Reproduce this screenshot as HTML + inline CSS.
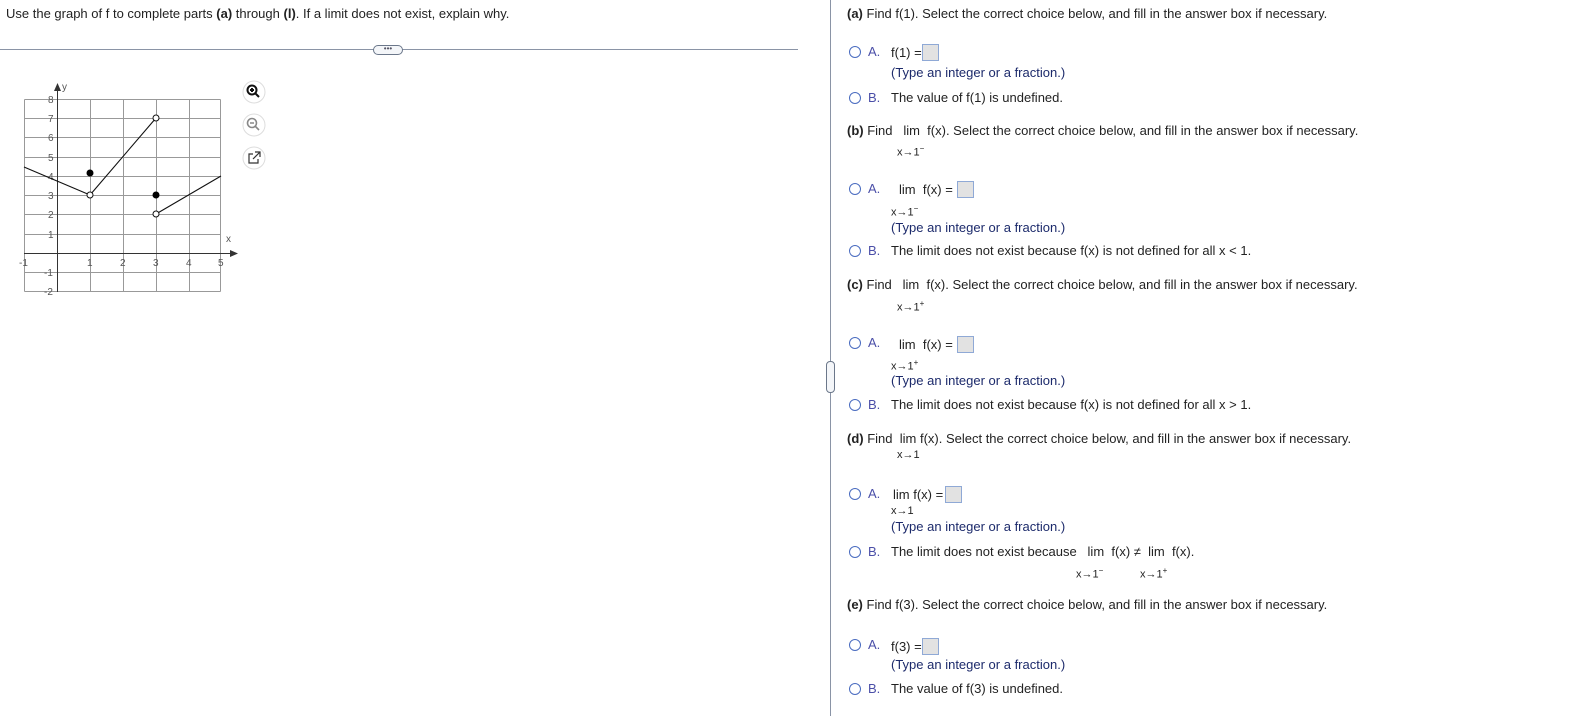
<!DOCTYPE html>
<html><head><meta charset="utf-8"><style>
body{margin:0;width:1588px;height:716px;background:#fff;font-family:"Liberation Sans",Arial,sans-serif;font-size:13px;color:#222;position:relative;overflow:hidden}
.t{position:absolute;white-space:nowrap;line-height:14px}
.r{position:absolute;width:10px;height:10px;border:1.3px solid #4a6cc0;border-radius:50%;left:849px}
.l{position:absolute;left:868px;color:#4b4fa8;line-height:14px}
.bx{position:absolute;width:15px;height:15px;background:#e2e2e2;border:1px solid #8fa9d6}
.bl{color:#1c2a6b}
.s{font-size:11px}
sup{font-size:8px}
</style></head><body>
<div class="t" style="left:6px;top:7px">Use the graph of f to complete parts <b>(a)</b> through <b>(l)</b>. If a limit does not exist, explain why.</div>
<div style="position:absolute;left:0;top:49px;width:798px;height:1px;background:#8a94a6"></div>
<div style="position:absolute;left:373px;top:45px;width:28px;height:8px;border:1px solid #6b778a;border-radius:5px;background:#f4f6f9;font-size:8px;line-height:6px;text-align:center;color:#556">•••</div>
<div style="position:absolute;left:830px;top:0;width:1px;height:716px;background:#8a94a6"></div>
<div style="position:absolute;left:826px;top:361px;width:7px;height:30px;border:1px solid #6b778a;border-radius:4px;background:#f4f6f9"></div>

<svg style="position:absolute;left:0;top:80px" width="280" height="220" viewBox="0 80 280 220">
<g stroke="#999" stroke-width="1" fill="none">
<path d="M24.5 99.5H220.5M24.5 118.5H220.5M24.5 137.5H220.5M24.5 157.5H220.5M24.5 176.5H220.5M24.5 195.5H220.5M24.5 214.5H220.5M24.5 234.5H220.5M24.5 272.5H220.5M24.5 291.5H220.5"/>
<path d="M24.5 99.5V291.5M90.5 99.5V291.5M123.5 99.5V291.5M156.5 99.5V291.5M189.5 99.5V291.5M220.5 99.5V291.5"/>
</g>
<path d="M57.5 86V292M24 253.5H236" stroke="#333" stroke-width="1"/>
<path d="M57.5 83L54 91H61Z M238 253.5L230 250V257Z" fill="#333"/>
<g font-family="Liberation Sans,Arial" font-size="10" fill="#555">
<text x="62" y="90">y</text><text x="226" y="242">x</text>
<text x="48" y="103">8</text><text x="48" y="122">7</text><text x="48" y="141">6</text><text x="48" y="161">5</text><text x="48" y="180">4</text><text x="48" y="199">3</text><text x="48" y="218">2</text><text x="48" y="238">1</text><text x="44" y="276">-1</text><text x="44" y="295">-2</text>
<text x="19" y="266">-1</text><text x="87" y="266">1</text><text x="120" y="266">2</text><text x="153" y="266">3</text><text x="186" y="266">4</text><text x="218" y="266">5</text>
</g>
<path d="M24 167L90 195M90 195L156 118M156 214L221 176" stroke="#111" stroke-width="1.1" fill="none"/>
<circle cx="90" cy="173" r="3.5" fill="#000"/><circle cx="156" cy="195" r="3.5" fill="#000"/>
<circle cx="90" cy="195" r="3" fill="#fff" stroke="#111"/><circle cx="156" cy="118" r="3" fill="#fff" stroke="#111"/><circle cx="156" cy="214" r="3" fill="#fff" stroke="#111"/>
<g>
<circle cx="254" cy="92" r="11" fill="#fff" stroke="#ddd"/><circle cx="252" cy="90" r="4.5" fill="none" stroke="#111" stroke-width="2"/><path d="M255 93L259 97M250 90H254M252 88V92" stroke="#111" stroke-width="2"/>
<circle cx="254" cy="125" r="11" fill="#fff" stroke="#ddd"/><circle cx="252" cy="123" r="4.5" fill="none" stroke="#888" stroke-width="1.6"/><path d="M255 126L259 130M250 123H254" stroke="#888" stroke-width="1.6"/>
<circle cx="254" cy="158" r="11" fill="#fff" stroke="#ddd"/><path d="M253 154H249V163H258V159M255 152H260V157M260 152L253 159" stroke="#333" stroke-width="1.2" fill="none"/>
</g>
</svg>

<div class="t" style="left:847px;top:7px"><b>(a)</b> Find f(1). Select the correct choice below, and fill in the answer box if necessary.</div>
<div class="r" style="top:46px"></div><div class="l" style="top:45px">A.</div>
<div class="t" style="left:891px;top:46px">f(1) =</div><div class="bx" style="left:922px;top:44px"></div>
<div class="t bl" style="left:891px;top:66px">(Type an integer or a fraction.)</div>
<div class="r" style="top:92px"></div><div class="l" style="top:91px">B.</div>
<div class="t" style="left:891px;top:91px">The value of f(1) is undefined.</div>

<div class="t" style="left:847px;top:124px"><b>(b)</b> Find &nbsp; lim &nbsp;f(x). Select the correct choice below, and fill in the answer box if necessary.</div>
<div class="t s" style="left:897px;top:142px">x→1<sup>−</sup></div>
<div class="r" style="top:183px"></div><div class="l" style="top:182px">A.</div>
<div class="t" style="left:899px;top:183px">lim &nbsp;f(x) =</div><div class="bx" style="left:957px;top:181px"></div>
<div class="t s" style="left:891px;top:202px">x→1<sup>−</sup></div>
<div class="t bl" style="left:891px;top:221px">(Type an integer or a fraction.)</div>
<div class="r" style="top:245px"></div><div class="l" style="top:244px">B.</div>
<div class="t" style="left:891px;top:244px">The limit does not exist because f(x) is not defined for all x &lt; 1.</div>

<div class="t" style="left:847px;top:278px"><b>(c)</b> Find &nbsp; lim &nbsp;f(x). Select the correct choice below, and fill in the answer box if necessary.</div>
<div class="t s" style="left:897px;top:297px">x→1<sup>+</sup></div>
<div class="r" style="top:337px"></div><div class="l" style="top:336px">A.</div>
<div class="t" style="left:899px;top:338px">lim &nbsp;f(x) =</div><div class="bx" style="left:957px;top:336px"></div>
<div class="t s" style="left:891px;top:356px">x→1<sup>+</sup></div>
<div class="t bl" style="left:891px;top:374px">(Type an integer or a fraction.)</div>
<div class="r" style="top:399px"></div><div class="l" style="top:398px">B.</div>
<div class="t" style="left:891px;top:398px">The limit does not exist because f(x) is not defined for all x &gt; 1.</div>

<div class="t" style="left:847px;top:432px"><b>(d)</b> Find &nbsp;lim f(x). Select the correct choice below, and fill in the answer box if necessary.</div>
<div class="t s" style="left:897px;top:448px">x→1</div>
<div class="r" style="top:488px"></div><div class="l" style="top:487px">A.</div>
<div class="t" style="left:893px;top:488px">lim f(x) =</div><div class="bx" style="left:945px;top:486px"></div>
<div class="t s" style="left:891px;top:504px">x→1</div>
<div class="t bl" style="left:891px;top:520px">(Type an integer or a fraction.)</div>
<div class="r" style="top:546px"></div><div class="l" style="top:545px">B.</div>
<div class="t" style="left:891px;top:545px">The limit does not exist because &nbsp; lim &nbsp;f(x) ≠ &nbsp;lim &nbsp;f(x).</div>
<div class="t s" style="left:1076px;top:564px">x→1<sup>−</sup></div>
<div class="t s" style="left:1140px;top:564px">x→1<sup>+</sup></div>

<div class="t" style="left:847px;top:598px"><b>(e)</b> Find f(3). Select the correct choice below, and fill in the answer box if necessary.</div>
<div class="r" style="top:639px"></div><div class="l" style="top:638px">A.</div>
<div class="t" style="left:891px;top:640px">f(3) =</div><div class="bx" style="left:922px;top:638px"></div>
<div class="t bl" style="left:891px;top:658px">(Type an integer or a fraction.)</div>
<div class="r" style="top:683px"></div><div class="l" style="top:682px">B.</div>
<div class="t" style="left:891px;top:682px">The value of f(3) is undefined.</div>
</body></html>
